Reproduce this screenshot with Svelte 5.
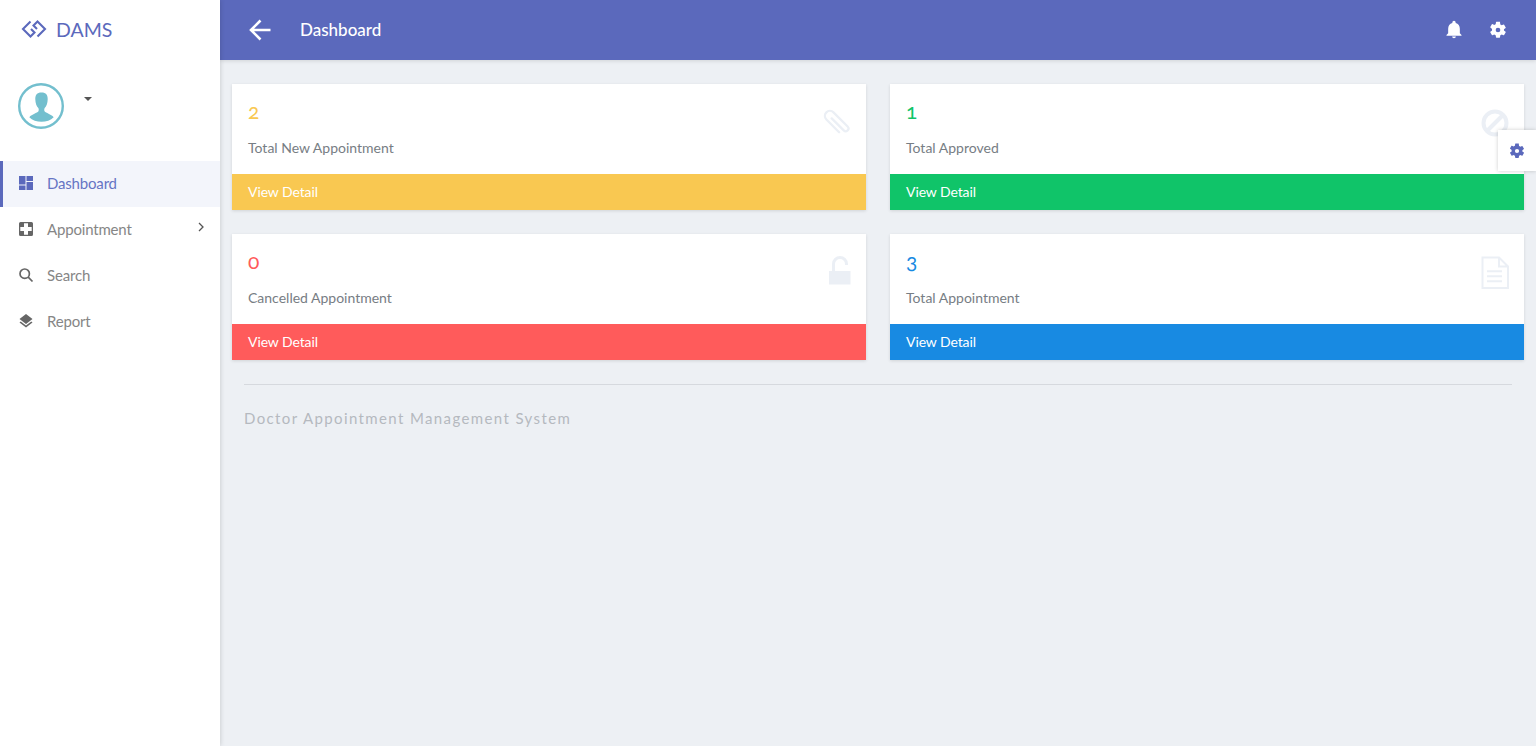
<script>
  const gear = "M19.14 12.94c.04-.3.06-.61.06-.94s-.02-.64-.07-.94l2.03-1.58a.49.49 0 0 0 .12-.61l-1.92-3.32a.49.49 0 0 0-.59-.22l-2.39.96a7 7 0 0 0-1.62-.94l-.36-2.54A.48.48 0 0 0 13.92 2h-3.84a.47.47 0 0 0-.47.41l-.36 2.54c-.59.24-1.13.57-1.62.94l-2.39-.96a.48.48 0 0 0-.59.22L2.74 8.47a.47.47 0 0 0 .12.61l2.03 1.58c-.05.3-.09.63-.09.94s.02.64.07.94l-2.03 1.58a.49.49 0 0 0-.12.61l1.92 3.32c.12.22.37.29.59.22l2.39-.96c.5.38 1.03.7 1.62.94l.36 2.54c.05.24.24.41.48.41h3.84c.24 0 .44-.17.47-.41l.36-2.54a7 7 0 0 0 1.62-.94l2.39.96c.22.08.47 0 .59-.22l1.92-3.32a.47.47 0 0 0-.12-.61l-2.01-1.58zM12 14.8a2.8 2.8 0 1 1 0-5.6 2.8 2.8 0 0 1 0 5.600z";

  const nav = [
    { label: "Dashboard", icon: "dashboard", active: true },
    { label: "Appointment", icon: "cross", arrow: true },
    { label: "Search", icon: "search" },
    { label: "Report", icon: "layers" }
  ];

  const cards = [
    { count: "2", label: "Total New Appointment", color: "#f9c851", icon: "clip" },
    { count: "1", label: "Total Approved", color: "#10c469", icon: "ban" },
    { count: "0", label: "Cancelled Appointment", color: "#ff5b5b", icon: "lock" },
    { count: "3", label: "Total Appointment", color: "#188ae2", icon: "doc" }
  ];
</script>

<div class="layout">
  <aside class="sidebar">
    <div class="brand">
      <svg class="logo" viewBox="0 0 26 18" width="26" height="18" fill="none" stroke="#5b69bc" stroke-width="2.100">
        <path d="M9.500 1.500 2 9l7.500 7.500 4-4L10 9" />
        <path d="M16.500 16.500 24 9l-7.500-7.500-4 4L16 9" />
      </svg>
      <span>DAMS</span>
    </div>

    <div class="user">
      <div class="avatar">
        <svg viewBox="0 0 46 46" width="46" height="46">
          <circle cx="23" cy="23" r="21.800" fill="#fff" stroke="#73bfce" stroke-width="2.400" />
          <path fill="#73bfce" d="M23.500 9.500c-4.600 0-6.300 2.600-6.200 6.800.1 4 1.200 7 3 8.800.6.700.6 2.700 0 3.500-1 1.300-6.300 2.800-9 5.600 2.800 3 7.700 4.500 12.200 4.500s9.400-1.500 12.200-4.500c-2.700-2.800-8-4.300-9-5.600-.6-.8-.6-2.800 0-3.500 1.800-1.800 2.900-4.800 3-8.800.1-4.200-1.600-6.800-6.200-6.800z" />
        </svg>
      </div>
      <span class="caret"></span>
    </div>

    <nav>
      {#each nav as item}
        <div class="nav-item" class:active={item.active}>
          <svg class="nav-icon" viewBox="0 0 16 16" width="16" height="16" fill="currentColor">
            {#if item.icon === "dashboard"}
              <path d="M1 1h6.500v8.500H1zM8.500 1H15v5H8.500zM1 10.500h6.500V15H1zM8.500 7H15v8H8.500z" />
            {:else if item.icon === "cross"}
              <path fill-rule="evenodd" d="M2.500 1h11A1.500 1.500 0 0 1 15 2.500v11a1.500 1.500 0 0 1-1.500 1.500h-11A1.500 1.500 0 0 1 1 13.500v-11A1.500 1.500 0 0 1 2.500 1zM6 2.300V6H2.300v4H6v3.700h4V10h3.700V6H10V2.300z" />
            {:else if item.icon === "search"}
              <path fill="none" stroke="currentColor" stroke-width="1.700" d="M6.700 2a4.700 4.700 0 1 1 0 9.400 4.700 4.700 0 0 1 0-9.400zM10.200 10.200 14.500 14.500" />
            {:else}
              <path d="M8 1 1.500 6 8 11l6.500-5zM8 12.500 2.700 8.400 1.500 9.400 8 14.500l6.500-5.100-1.200-1z" />
            {/if}
          </svg>
          <span>{item.label}</span>
          {#if item.arrow}
            <svg class="chevron" viewBox="0 0 8 10" width="8" height="10" fill="none" stroke="currentColor" stroke-width="1.300">
              <path d="M2 1l4 4-4 4" />
            </svg>
          {/if}
        </div>
      {/each}
    </nav>
  </aside>

  <div class="main">
    <header class="topbar">
      <svg class="back" viewBox="0 0 24 24" width="24" height="24" fill="none" stroke="#fff" stroke-width="2.600">
        <path d="M22.500 12H3.500M12.500 2.500 3 12l9.500 9.500" />
      </svg>
      <h1>Dashboard</h1>
      <div class="actions">
        <svg viewBox="0 0 24 24" width="20" height="20" fill="#fff">
          <path d="M12 22a2.300 2.300 0 0 0 2.300-2.200H9.700A2.300 2.300 0 0 0 12 22zm7-6v-5.500c0-3.400-1.800-6.200-5-6.900V3a2 2 0 0 0-4 0v.6c-3.200.7-5 3.500-5 6.900V16l-2 2v1h18v-1z" />
        </svg>
        <svg viewBox="0 0 24 24" width="20" height="20" fill="#fff"><path d={gear} /></svg>
      </div>
    </header>

    <main class="content">
      <div class="grid">
        {#each cards as card}
          <div class="card">
            <div class="card-body">
              <div class="count" style="color: {card.color}">{card.count}</div>
              <div class="label">{card.label}</div>
              <svg class="watermark" viewBox="0 0 28 34" width="28" height="34">
                {#if card.icon === "clip"}
                  <path fill="none" stroke="#ebeff5" stroke-width="2.300" stroke-linecap="round" transform="translate(0 3) rotate(-45 14 14)" d="M13.500 7v17a2.750 2.750 0 0 0 5.500 0V4a5 5 0 0 0-10 0v18" />
                {:else if card.icon === "ban"}
                  <g fill="none" stroke="#ebeff5" stroke-width="4" transform="translate(0 3)">
                    <circle cx="14" cy="14" r="11.500" />
                    <path d="M6 22 22 6" />
                  </g>
                {:else if card.icon === "lock"}
                  <path fill="#ebeff5" d="M6 15h21.500v13.500H6z" />
                  <path fill="none" stroke="#ebeff5" stroke-width="3" d="M10.500 15V8a6.500 6.500 0 0 1 13 0v1" />
                {:else}
                  <path fill="none" stroke="#ebeff5" stroke-width="2" d="M1.500 1.500H18l9 9V32H1.500zM18 1.500v9h9M6 15.200h15M6 20.200h15M6 25.200h15" />
                {/if}
              </svg>
            </div>
            <div class="card-foot" style="background: {card.color}">View Detail</div>
          </div>
        {/each}
      </div>

      <footer class="foot">Doctor Appointment Management System</footer>
    </main>
  </div>

  <div class="settings-tab">
    <svg viewBox="0 0 24 24" width="18" height="18" fill="#5b69bc"><path d={gear} /></svg>
  </div>
</div>

<style>
  :global(body) {
    background: #edf0f4;
    font-family: "Lato", "Open Sans", sans-serif;
  }

  .layout {
    display: flex;
    min-height: 746px;
    overflow: hidden;
  }

  .sidebar {
    width: 220px;
    flex-shrink: 0;
    background: #fff;
    box-shadow: 0 0 5px rgba(0, 0, 0, 0.18);
    z-index: 2;
  }

  .brand {
    height: 58px;
    padding-bottom: 2px;
    display: flex;
    align-items: center;
    gap: 9px;
    padding-left: 21px;
    color: #5b69bc;
    font-size: 19.500px;
  }

  .user {
    display: flex;
    align-items: flex-start;
    padding: 23px 0 0 18px;
    height: 78px;
  }

  .avatar {
    height: 46px;
  }

  .caret {
    margin: 14px 0 0 20px;
    border: 4px solid transparent;
    border-top-color: #555;
    border-bottom: 0;
  }

  .nav-item {
    display: flex;
    align-items: center;
    box-sizing: border-box;
    height: 46px;
    padding: 0 0 2px 18px;
    color: #868686;
    font-size: 15px;
    letter-spacing: -0.180px;
    position: relative;
  }

  .nav-item.active {
    background: #f3f5fb;
    color: #6674c4;
    box-shadow: inset 3px 0 0 #5b69bc;
  }

  .nav-icon {
    margin-right: 13px;
    color: #666;
  }

  .active .nav-icon {
    color: #5b69bc;
  }

  .chevron {
    position: absolute;
    right: 15px;
    top: 15px;
    color: #555;
  }

  .main {
    flex: 1;
    min-width: 0;
  }

  .topbar {
    box-sizing: border-box;
    height: 60px;
    background: #5b69bc;
    box-shadow: 0 1px 4px rgba(0, 0, 0, 0.12);
    display: flex;
    align-items: center;
    padding: 0 0 1px 28px;
    color: #fff;
  }

  .topbar h1 {
    margin: 0 0 0 28px;
    font-size: 17px;
    font-weight: 500;
  }

  .actions {
    margin-left: auto;
    display: flex;
    gap: 24px;
    padding-right: 28px;
  }

  .content {
    padding: 24px 12px;
  }

  .grid {
    display: grid;
    grid-template-columns: 1fr 1fr;
    gap: 24px;
  }

  .card {
    background: #fff;
    box-shadow: 0 1px 3px rgba(0, 0, 0, 0.12);
  }

  .card-body {
    height: 90px;
    padding: 0 16px;
    position: relative;
  }

  .count {
    padding-top: 15px;
    font-size: 21px;
    line-height: 24px;
    height: 39px;
    box-sizing: border-box;
    font-variant-numeric: oldstyle-nums;
  }

  .label {
    margin-top: 15px;
    font-size: 14px;
    line-height: 20px;
    color: #777d84;
  }

  .watermark {
    position: absolute;
    right: 15px;
    top: 22px;
  }

  .card-foot {
    height: 36px;
    line-height: 36px;
    padding-left: 16px;
    color: #fff;
    font-size: 14px;
    letter-spacing: -0.100px;
  }

  .foot {
    margin: 24px 12px 0;
    padding-top: 23px;
    border-top: 1px solid #d6d9de;
    color: #b5b9bf;
    font-size: 15px;
    line-height: 20px;
    letter-spacing: 1.380px;
  }

  .settings-tab {
    position: absolute;
    top: 130px;
    right: 0;
    width: 38px;
    height: 41px;
    background: #fff;
    box-shadow: 0 0 4px rgba(0, 0, 0, 0.2);
    z-index: 3;
    display: flex;
    align-items: center;
    justify-content: center;
  }
</style>
